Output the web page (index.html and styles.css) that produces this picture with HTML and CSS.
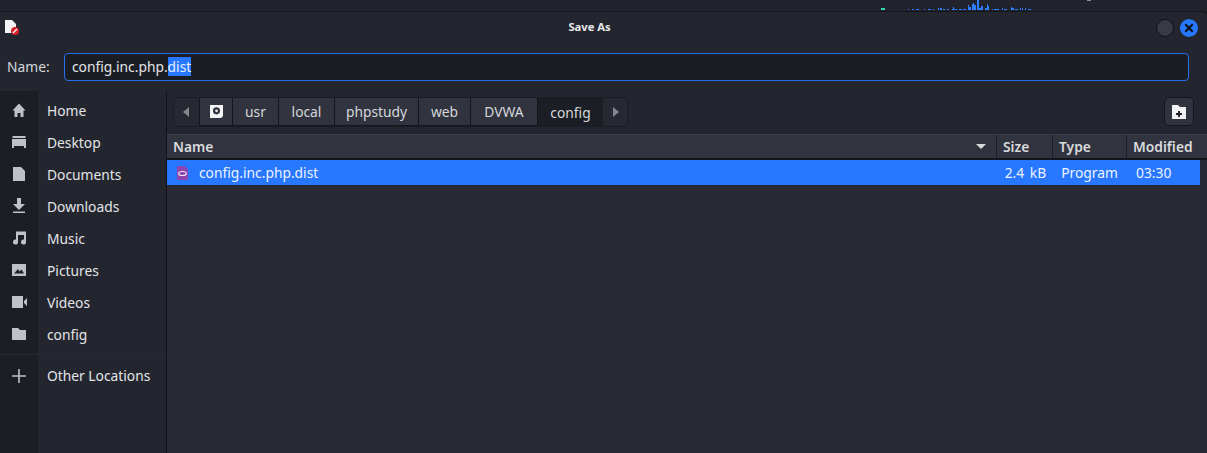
FILE: index.html
```html
<!DOCTYPE html>
<html lang="en">
<head>
<meta charset="utf-8">
<title>Save As</title>
<link rel="stylesheet" href="styles.css">
</head>
<body>
<div class="strip">
  <svg class="spark" width="250" height="11" viewBox="0 0 250 11">
    <rect x="31" y="8" width="4" height="2" fill="#2fd6b4"/>
    <rect x="237" y="0" width="4" height="1" fill="#8d8f94"/>
    <g fill="#2b7fff">
      <rect x="58" y="9" width="1" height="1"/><rect x="62" y="9" width="2" height="1"/><rect x="66" y="9" width="3" height="1"/><rect x="74" y="9" width="1" height="1"/>
      <rect x="78" y="9" width="3" height="1"/><rect x="83" y="9" width="1" height="1"/><rect x="88" y="8" width="1" height="2"/><rect x="90" y="8" width="2" height="2"/><rect x="93" y="9" width="2" height="1"/><rect x="97" y="9" width="2" height="1"/>
      <rect x="103" y="7" width="1" height="3"/><rect x="102" y="9" width="5" height="1"/><rect x="109" y="9" width="3" height="1"/><rect x="113" y="9" width="3" height="1"/>
      <rect x="118" y="5" width="1" height="5"/><rect x="119" y="7" width="2" height="3"/><rect x="122" y="4" width="1" height="6"/><rect x="123" y="3" width="1" height="7"/><rect x="124" y="5" width="2" height="5"/><rect x="127" y="0" width="2" height="10"/><rect x="129" y="8" width="2" height="2"/><rect x="131" y="6" width="2" height="4"/>
      <rect x="135" y="8" width="2" height="2"/><rect x="137" y="4" width="1" height="6"/><rect x="138" y="6" width="1" height="4"/><rect x="142" y="9" width="1" height="1"/><rect x="144" y="9" width="5" height="1"/><rect x="152" y="8" width="1" height="2"/><rect x="154" y="9" width="3" height="1"/>
      <rect x="161" y="7" width="1" height="3"/><rect x="162" y="8" width="2" height="2"/><rect x="165" y="9" width="3" height="1"/><rect x="170" y="8" width="1" height="2"/><rect x="172" y="8" width="1" height="2"/><rect x="175" y="8" width="1" height="2"/><rect x="178" y="9" width="3" height="1"/>
    </g>
  </svg>
</div>
<div class="window">
  <header class="titlebar">
    <svg class="app-icon" width="16" height="16" viewBox="0 0 16 16">
      <path d="M0 0h7l4 4v9H0z" fill="#f4f4f4"/>
      <circle cx="10" cy="11" r="4" fill="#d8202c"/>
      <path d="M8 13l4-4" stroke="#fff" stroke-width="1.2"/>
    </svg>
    <h1 class="title">Save As</h1>
    <div class="winbtns">
      <span class="winbtn"></span>
      <span class="winbtn close">
        <svg width="10" height="10" viewBox="0 0 10 10"><path d="M1.3 1.3l7.4 7.4M8.7 1.3L1.3 8.7" stroke="#0d1016" stroke-width="2.2"/></svg>
      </span>
    </div>
  </header>
  <div class="namerow">
    <label class="namelabel">Name:</label>
    <div class="nameinput">config.inc.php.<span class="sel">dist</span></div>
  </div>
  <div class="body">
    <aside class="sidebar">
      <ul class="places">
        <li class="place"><span class="pico"><svg width="16" height="16" viewBox="0 0 16 16"><path d="M8 1.500L1.500 8.500h2V15h3v-4h3v4h3V8.500h2z" fill="#bfc1c6"/></svg></span><span>Home</span></li>
        <li class="place"><span class="pico"><svg width="16" height="16" viewBox="0 0 16 16"><path d="M1.500 2h13v2h-13zM1 5h14v9h-2v-2H3v2H1z" fill="#bfc1c6"/></svg></span><span>Desktop</span></li>
        <li class="place"><span class="pico"><svg width="16" height="16" viewBox="0 0 16 16"><path d="M2 1h8l4 4v10H2z" fill="#bfc1c6"/></svg></span><span>Documents</span></li>
        <li class="place"><span class="pico"><svg width="16" height="16" viewBox="0 0 16 16"><path d="M6 0h4v6h4l-6 6-6-6h4zM2 13.500h12V15H2z" fill="#bfc1c6"/></svg></span><span>Downloads</span></li>
        <li class="place"><span class="pico"><svg width="16" height="16" viewBox="0 0 16 16"><path d="M5 1.500h10v10.500a2.500 2.500 0 1 1-2-2.400V5H7v7a2.500 2.500 0 1 1-2-2.400z" fill="#bfc1c6"/></svg></span><span>Music</span></li>
        <li class="place"><span class="pico"><svg width="16" height="16" viewBox="0 0 16 16"><path fill-rule="evenodd" d="M1 2h14v12H1zM3 11.500h10l-2.500-4-2 2-1.500-2.500z" fill="#bfc1c6"/></svg></span><span>Pictures</span></li>
        <li class="place"><span class="pico"><svg width="16" height="16" viewBox="0 0 16 16"><path d="M1 2h11v12H1zM13 7l3-3v8l-3-3z" fill="#bfc1c6"/></svg></span><span>Videos</span></li>
        <li class="place"><span class="pico"><svg width="16" height="16" viewBox="0 0 16 16"><path d="M1 2h6l2 2h6v10H1z" fill="#bfc1c6"/></svg></span><span>config</span></li>
        <li class="place other"><span class="pico"><svg width="16" height="16" viewBox="0 0 16 16"><path d="M7.200 1h1.600v6.200H15v1.600H8.800V15H7.200V8.800H1V7.200h6.200z" fill="#bfc1c6"/></svg></span><span>Other Locations</span></li>
      </ul>
    </aside>
    <main class="main">
      <div class="pathbar">
        <nav class="crumbs">
          <span class="arrow"><svg width="7" height="10" viewBox="0 0 7 10"><path d="M6 0v10L0 5z" fill="#85878d"/></svg></span>
          <span class="crumb root"><svg width="13" height="13" viewBox="0 0 14 14"><path fill-rule="evenodd" d="M0 0h14v12l-2 2H0zM7 2.500a3.800 3.800 0 1 0 0 7.600 3.800 3.800 0 0 0 0-7.600zM7 4.900a1.400 1.400 0 1 1 0 2.800 1.400 1.400 0 0 1 0-2.800z" fill="#f4f4f4"/></svg></span>
          <span class="crumb c-usr">usr</span>
          <span class="crumb c-local">local</span>
          <span class="crumb c-php">phpstudy</span>
          <span class="crumb c-web">web</span>
          <span class="crumb c-dvwa">DVWA</span>
          <span class="crumb current">config</span>
          <span class="arrow right"><svg width="7" height="10" viewBox="0 0 7 10"><path d="M1 0v10l6-5z" fill="#85878d"/></svg></span>
        </nav>
        <button class="newfolder" type="button" aria-label="New folder">
          <svg width="16" height="14" viewBox="0 0 16 14"><path d="M1 0h6l2 2h6v12H1z" fill="#f1f1f1"/><path d="M7 6h2v2h2v2H9v2H7v-2H5V8h2z" fill="#22252e"/></svg>
        </button>
      </div>
      <div class="columns">
        <div class="col c-name"><span>Name</span><svg width="10" height="5" viewBox="0 0 10 5"><path d="M0 0h10L5 5z" fill="#d8d9dc"/></svg></div>
        <div class="col c-size">Size</div>
        <div class="col c-type">Type</div>
        <div class="col c-mod">Modified</div>
      </div>
      <div class="row">
        <div class="cell c-name">
          <svg width="11" height="14" viewBox="0 0 11 14"><path d="M1 0h6.500L11 3.500V14H0V1z" fill="#8e44ad"/><ellipse cx="5.500" cy="7.500" rx="3.800" ry="2" fill="none" stroke="#f2e6f7" stroke-width="1.200"/></svg>
          <span>config.inc.php.dist</span>
        </div>
        <div class="cell c-size num">2.4 kB</div>
        <div class="cell c-type">Program</div>
        <div class="cell c-mod">03:30</div>
      </div>
    </main>
  </div>
</div>
</body>
</html>
```
FILE: styles.css
```css
* { box-sizing: border-box; }
html, body { height: 100%; }
body {
  margin: 0;
  background: #1c1e25;
  font-family: "Noto Sans", sans-serif;
  font-size: 13.8px;
  color: #e4e5e8;
  display: flex;
  flex-direction: column;
  overflow: hidden;
}
.strip { height: 11px; background: #20232b; padding-left: 850px; flex: none; }
.spark { display: block; }
.window {
  flex: 1;
  min-height: 0;
  display: flex;
  flex-direction: column;
  background: #23262f;
  border-top: 1px solid #14161b;
  border-top-right-radius: 5px;
}
.titlebar {
  height: 30px;
  flex: none;
  display: flex;
  align-items: center;
  position: relative;
  padding: 0 6px 0 5px;
}
.app-icon { margin-top: 1px; }
.title {
  position: absolute;
  left: 0; right: 28px;
  margin: 0;
  text-align: center;
  font-size: 11.2px;
  font-weight: 700;
  color: #e8e9eb;
  pointer-events: none;
  top: 7px;
}
.winbtns { margin-left: auto; display: flex; gap: 6px; margin-right: 3px; margin-top: 1px; }
.winbtn {
  width: 18px; height: 18px;
  border-radius: 50%;
  background: #383b46;
  border: 1px solid #111318;
  display: flex; align-items: center; justify-content: center;
}
.winbtn.close { background: #2777ff; border: 0; }
.namerow {
  height: 49px;
  flex: none;
  display: flex;
  align-items: flex-start;
  padding: 11px 18px 0 7px;
}
.namelabel { width: 57px; line-height: 28px; color: #d5d7db; flex: none; }
.nameinput {
  flex: 1;
  height: 28px;
  line-height: 26px;
  background: #1b1d25;
  border: 1px solid #2470ef;
  border-radius: 4px;
  padding: 0 7px;
  color: #e4e5e8;
}
.sel { background: #2777ff; color: #e8f0ff; display: inline-block; line-height: 19px; }
.body { flex: 1; min-height: 0; display: flex; }
.sidebar {
  width: 167px;
  flex: none;
  border-right: 1px solid #111318;
  background: linear-gradient(to right, #1c1e26 38px, #23262f 38px);
}
.places { list-style: none; margin: 0; padding: 3px 0 0; }
.place { height: 32px; display: flex; align-items: center; }
.place.other { margin-top: 4px; height: 37px; padding-top: 5px; border-top: 1px solid #262932; }
.pico { width: 47px; flex: none; padding-left: 11px; display: flex; align-items: center; }
.main { flex: 1; min-width: 0; background: #282b34; display: flex; flex-direction: column; }
.pathbar {
  height: 43px;
  flex: none;
  display: flex;
  align-items: flex-start;
  padding: 6px 13px 0 6px;
  background: #23262f;
}
.crumbs {
  display: flex;
  height: 30px;
  border: 1px solid #1c1e25;
  border-radius: 6px;
  background: #262932;
}
.arrow { width: 25px; display: flex; align-items: center; justify-content: center; }
.arrow.right { width: 24px; }
.crumb {
  display: flex; align-items: center; justify-content: center;
  background: #31343f;
  border-left: 1px solid #14161b;
  border-bottom: 1px solid #14161b;
  color: #d5d7db;
}
.root { width: 33px; }
.c-usr { width: 46px; }
.c-local { width: 56px; }
.c-php { width: 84px; }
.c-web { width: 52px; }
.c-dvwa { width: 67px; }
.current { width: 66px; background: #1c1e25; border-bottom: 0; }
.newfolder {
  margin-left: auto;
  width: 30px; height: 29px;
  padding: 0;
  border: 1px solid #14161b;
  border-radius: 5px;
  background: #31343f;
  display: flex; align-items: center; justify-content: center;
}
.columns {
  height: 26px;
  flex: none;
  display: flex;
  background: #31343f;
  border-top: 1px solid #3a3d48;
  border-bottom: 2px solid #14161b;
  font-weight: 600;
  font-size: 13.8px;
}
.col { display: flex; align-items: center; padding-left: 6px; border-right: 1px solid #1c1e25; color: #d9dade; }
.col.c-name { justify-content: space-between; padding-right: 10px; }
.c-name { width: 830px; }
.c-size { width: 56px; }
.c-type { width: 74px; }
.c-mod { width: 74px; }
.col.c-mod { border-right: 0; }
.row {
  height: 25px;
  flex: none;
  display: flex;
  background: #2777ff;
  color: #eef3ff;
  width: 1033px;
}
.cell { display: flex; align-items: center; padding-left: 8px; }
.cell.c-name { gap: 11px; padding-left: 10px; }
.cell.num { justify-content: flex-end; padding-right: 6px; word-spacing: 2px; }
.cell.c-type { padding-left: 9px; }
.cell.c-mod { padding-left: 10px; }
```
